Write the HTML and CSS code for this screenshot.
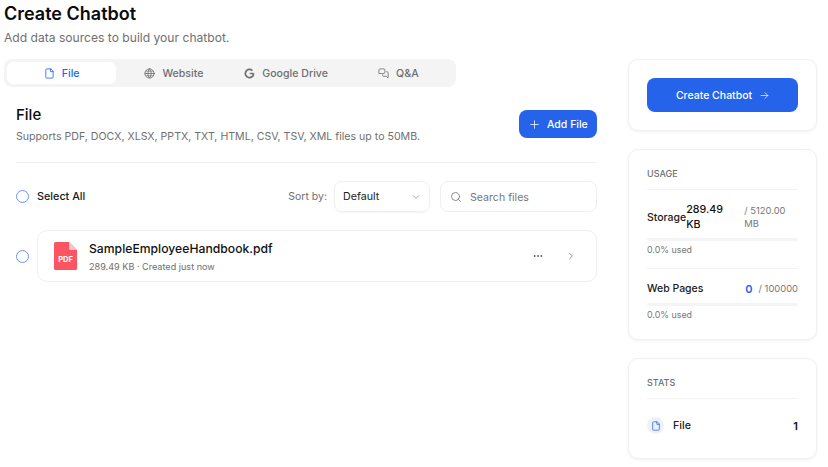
FILE: index.html
```html
<!DOCTYPE html>
<html lang="en">
<head>
<meta charset="utf-8">
<title>Create Chatbot</title>
<link rel="stylesheet" href="styles.css">
</head>
<body>
<div class="page">
  <header class="page-head">
    <h1>Create Chatbot</h1>
    <p>Add data sources to build your chatbot.</p>
  </header>
  <div class="layout">
    <main class="main">
      <nav class="tabs">
        <a class="tab active"><svg class="ic" viewBox="0 0 24 24"><path d="M14 2H6a2 2 0 0 0-2 2v16a2 2 0 0 0 2 2h12a2 2 0 0 0 2-2V8z"/><path d="M14 2v6h6"/></svg>File</a>
        <a class="tab"><svg class="ic" viewBox="0 0 24 24"><circle cx="12" cy="12" r="10"/><path d="M2 12h20"/><path d="M12 2a15 15 0 0 1 0 20a15 15 0 0 1 0-20z"/><path d="M4 7h16M4 17h16" stroke-width="1.4"/></svg>Website</a>
        <a class="tab"><svg class="ic" viewBox="0 0 24 24"><path class="g" d="M21 12h-8.500M21 12a9 9 0 1 1-2.700-6.400"/></svg>Google Drive</a>
        <a class="tab"><svg class="ic" viewBox="0 0 24 24"><path d="M15 10a2 2 0 0 1-2 2H7l-5 0V4a2 2 0 0 1 2-2h9a2 2 0 0 1 2 2z"/><path d="M19 8h1a2 2 0 0 1 2 2v12l-4-4h-6a2 2 0 0 1-2-2v-1"/></svg>Q&amp;A</a>
      </nav>
      <section class="panel">
        <div class="panel-head">
          <div class="panel-title">
            <h2>File</h2>
            <p>Supports PDF, DOCX, XLSX, PPTX, TXT, HTML, CSV, TSV, XML files up to 50MB.</p>
          </div>
          <button class="add-btn"><svg class="ic" viewBox="0 0 24 24"><path d="M12 2v20M2 12h20"/></svg>Add File</button>
        </div>
        <div class="toolbar">
          <label class="select-all"><span class="radio"></span>Select All</label>
          <div class="controls">
            <span class="sort-label">Sort by:</span>
            <div class="select">Default<svg class="ic" viewBox="0 0 24 24"><path d="M4 8l8 8 8-8"/></svg></div>
            <div class="search"><svg class="ic" viewBox="0 0 24 24"><circle cx="11" cy="11" r="8"/><path d="M21 21l-4.300-4.300"/></svg>Search files</div>
          </div>
        </div>
        <div class="file-line">
          <span class="radio"></span>
          <article class="file-card">
            <svg class="pdf" viewBox="0 0 23 28"><path fill="#fb5562" d="M1.500 0H15l8 8v18.500a1.500 1.500 0 0 1-1.500 1.500h-20A1.500 1.500 0 0 1 0 26.500v-25A1.500 1.500 0 0 1 1.500 0z"/><path fill="#fdc3c8" d="M15 0l8 8h-6.500A1.500 1.500 0 0 1 15 6.500z"/><text x="11.500" y="19.500" text-anchor="middle" class="pdf-text">PDF</text></svg>
            <div class="file-info">
              <div class="file-name">SampleEmployeeHandbook.pdf</div>
              <div class="file-meta">289.49 KB · Created just now</div>
            </div>
            <svg class="more" viewBox="0 0 12 4"><circle cx="2" cy="2" r="1.100"/><circle cx="6" cy="2" r="1.100"/><circle cx="10" cy="2" r="1.100"/></svg>
            <svg class="ic chev" viewBox="0 0 24 24"><path d="M8 4l8 8-8 8"/></svg>
          </article>
        </div>
      </section>
    </main>
    <aside class="side">
      <div class="card cta">
        <button class="create-btn">Create Chatbot<svg class="ic" viewBox="0 0 24 24"><path d="M3 12h18M13 4l8 8-8 8"/></svg></button>
      </div>
      <div class="card usage">
        <h3>USAGE</h3>
        <div class="metric storage">
          <span class="m-label">Storage</span>
          <span class="m-val">289.49 KB</span>
          <span class="m-max">/ 5120.00 MB</span>
        </div>
        <div class="bar"></div>
        <div class="used">0.0% used</div>
        <div class="metric pages">
          <span class="m-label">Web Pages</span>
          <span class="m-zero">0</span>
          <span class="m-max">/ 100000</span>
        </div>
        <div class="bar"></div>
        <div class="used">0.0% used</div>
      </div>
      <div class="card stats">
        <h3>STATS</h3>
        <div class="stat">
          <span class="stat-ic"><svg class="ic" viewBox="0 0 24 24"><path d="M14 2H6a2 2 0 0 0-2 2v16a2 2 0 0 0 2 2h12a2 2 0 0 0 2-2V8z"/><path d="M14 2v6h6"/></svg></span>
          <span class="stat-label">File</span>
          <span class="stat-val">1</span>
        </div>
      </div>
    </aside>
  </div>
</div>
</body>
</html>
```
FILE: styles.css
```css
* { box-sizing: border-box; }
html, body { margin: 0; height: 100%; overflow: hidden; background: #fff; }
body { font-family: Inter, "Liberation Sans", sans-serif; color: #111; }
.page { padding: 0 11px 0 4px; }
.page-head { height: 59px; }
h1 { margin: 0; padding-top: 1px; font-size: 18px; line-height: 26px; font-weight: 600; color: #0a0a0a; }
.page-head p { margin: 2px 0 0; font-size: 12.100px; line-height: 18px; color: #6f6f6f; }
.layout { display: flex; justify-content: space-between; align-items: flex-start; }
.main { width: 605px; }
.tabs { display: grid; grid-template-columns: repeat(4, 1fr); gap: 3px; width: 452px; height: 28px; padding: 3px; background: #f4f4f5; border-radius: 8px; }
.tab { display: flex; align-items: center; justify-content: center; gap: 7px; font-size: 10.600px; font-weight: 500; color: #6f6f6f; border-radius: 6px; }
.tab .ic { width: 11px; height: 11px; stroke-width: 1.800; }
.tab .g { stroke-width: 3.600; stroke-linecap: butt; stroke-linejoin: miter; }
.tab.active { background: #fff; color: #2563eb; }
.ic { fill: none; stroke: currentColor; stroke-width: 2; stroke-linecap: round; stroke-linejoin: round; flex: none; }
.panel { padding: 17px 12px 0; }
.panel-head { display: flex; justify-content: space-between; align-items: flex-start; height: 59px; border-bottom: 1px solid #f0f0f0; }
.panel-title { padding-top: 1px; }
h2 { margin: 0; font-size: 15px; line-height: 20px; font-weight: 500; color: #0a0a0a; }
.panel-head p { margin: 4px 0 0; font-size: 10.600px; line-height: 16px; color: #6f6f6f; }
.add-btn { display: flex; align-items: center; gap: 8px; height: 28px; width: 78px; margin-top: 6px; padding: 0 0 0 11px; border: 0; border-radius: 8px; background: #2563eb; color: #fff; font: 500 10.500px Inter, sans-serif; }
.add-btn .ic { width: 9px; height: 9px; }
.toolbar { display: flex; justify-content: space-between; align-items: center; margin-top: 18px; height: 31px; }
.select-all { display: flex; align-items: center; gap: 8px; font-size: 10.800px; font-weight: 500; color: #1a1a1a; }
.radio { width: 13px; height: 13px; border-radius: 50%; border: 1.300px solid #6f94ee; background: #fff; flex: none; }
.controls { display: flex; align-items: center; }
.sort-label { font-size: 10.500px; color: #6f6f6f; margin-right: 7px; }
.select { display: flex; justify-content: space-between; align-items: center; width: 96px; height: 31px; padding: 0 9px 0 8px; border: 1px solid #f0f0f0; border-radius: 8px; font-size: 10.700px; color: #222; box-shadow: 0 1px 2px rgba(0,0,0,.05); }
.select .ic { width: 8px; height: 8px; color: #777; stroke-width: 2; }
.search { display: flex; align-items: center; gap: 8px; width: 157px; height: 31px; margin-left: 10px; padding: 1px 0 0 9px; border: 1px solid #f0f0f0; border-radius: 8px; font-size: 10.600px; color: #777; }
.search .ic { width: 12px; height: 12px; stroke-width: 1.700; }
.file-line { display: flex; align-items: center; gap: 8px; margin-top: 18px; }
.file-card { flex: 1; display: flex; align-items: center; height: 52px; padding: 0 21px 0 16px; border: 1px solid #f0f0f0; border-radius: 10px; }
.pdf { width: 23px; height: 28px; flex: none; }
.pdf-text { font: 700 7.500px Inter, sans-serif; fill: #fff; }
.file-info { flex: 1; margin: 3px 0 0 12px; }
.file-name { font-size: 12.200px; line-height: 17px; font-weight: 500; color: #111; margin-top: -2px; }
.file-meta { font-size: 9.100px; line-height: 13px; margin-top: 3px; color: #6f6f6f; }
.more { width: 10px; height: 4px; fill: #555; flex: none; }
.chev { width: 8px; height: 8px; color: #555; margin-left: 24px; }
.side { width: 189px; display: flex; flex-direction: column; gap: 18px; }
.card { border: 1px solid #f1f1f1; border-radius: 10px; background: #fff; box-shadow: 0 1px 3px rgba(0,0,0,.06); padding: 0 18px; }
.cta { height: 72px; padding-top: 18px; }
.create-btn { display: flex; align-items: center; justify-content: center; gap: 8px; width: 100%; height: 34px; border: 0; border-radius: 8px; background: #2563eb; color: #fff; font: 500 10.500px Inter, sans-serif; }
.create-btn .ic { width: 9px; height: 9px; stroke-width: 1.800; }
.usage { height: 191px; padding-top: 17px; }
.stats { height: 101px; padding-top: 17px; }
h3 { margin: 0; height: 23px; font-size: 9px; line-height: 13px; font-weight: 500; color: #6f6f6f; border-bottom: 1px solid #f3f3f3; }
.metric { display: flex; align-items: center; }
.m-label { font-size: 10.500px; font-weight: 500; color: #1c1c1c; }
.storage { height: 48px; padding-top: 6px; }
.m-val { width: 58px; padding-right: 8px; font-size: 10.700px; line-height: 15px; font-weight: 500; color: #111; }
.m-max { font-size: 9.400px; line-height: 13px; color: #777; }
.storage .m-max { flex: 1; }
.bar { height: 3px; background: #f4f4f5; border-radius: 2px; }
.used { font-size: 8.900px; line-height: 13px; margin-top: 2px; color: #777; height: 26px; border-bottom: 1px solid #f3f3f3; }
.pages { height: 29px; margin-top: 5px; }
.pages .m-label { flex: 1; }
.m-zero { font-size: 11px; font-weight: 600; color: #2563eb; margin-right: 6px; }
.usage .used:last-child { border: 0; }
.stat { display: flex; align-items: center; margin-top: 18px; }
.stat-ic { display: flex; align-items: center; justify-content: center; width: 17px; height: 17px; border-radius: 50%; background: #eef1f8; color: #3b6fe8; }
.stat-ic .ic { width: 10px; height: 10px; }
.stat-label { flex: 1; margin-left: 9px; font-size: 10.700px; font-weight: 500; color: #222; }
.stat-val { font-size: 11px; font-weight: 600; color: #111; }
```
